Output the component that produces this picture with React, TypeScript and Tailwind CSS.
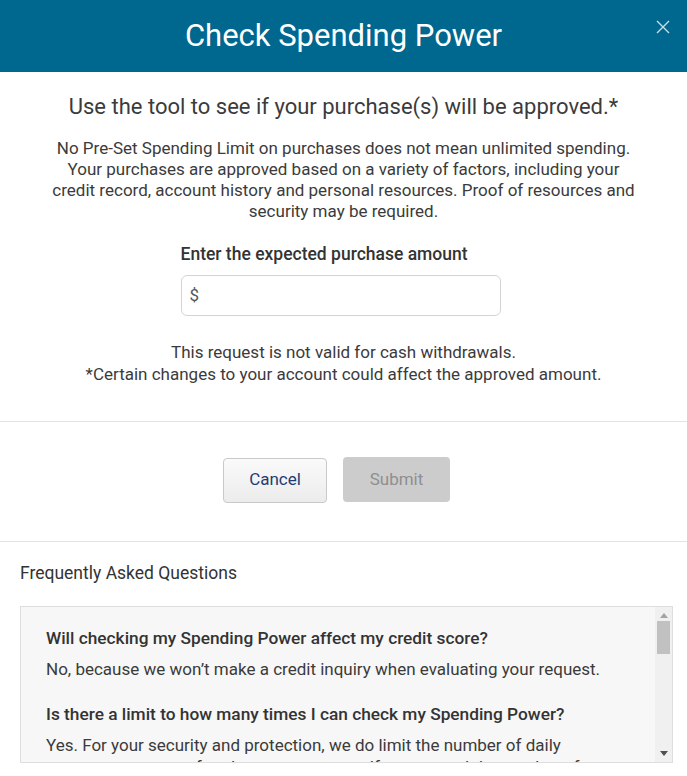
import React from 'react';

const faqs = [
  {
    q: 'Will checking my Spending Power affect my credit score?',
    a: 'No, because we won\u2019t make a credit inquiry when evaluating your request.',
  },
  {
    q: 'Is there a limit to how many times I can check my Spending Power?',
    a: 'Yes. For your security and protection, we do limit the number of daily requests to prevent fraud on your account. If you exceed the number of requests allowed, please try again tomorrow.',
  },
];

export default function App() {
  return (
    <div className="w-[687px] h-[776px] overflow-hidden bg-white text-[#333] font-['Roboto','Liberation_Sans',sans-serif]">
      {/* Header */}
      <div className="h-[72px] bg-[#00678f] flex items-center justify-center relative">
        <h1 className="text-[31px] text-white font-normal">Check Spending Power</h1>
        <button className="absolute right-[16px] top-[19px] w-[16px] h-[16px] text-[#c8dde8]">
          <svg viewBox="0 0 16 16" className="w-[16px] h-[16px]" fill="none" stroke="currentColor" strokeWidth="1.4">
            <path d="M2 2L14 14M14 2L2 14" />
          </svg>
        </button>
      </div>

      {/* Body */}
      <div className="flex flex-col items-center text-center px-[30px]">
        <h2 className="mt-[21px] text-[22px] leading-[28px] text-[#3b3b3b]">
          Use the tool to see if your purchase(s) will be approved.*
        </h2>
        <p className="mt-[17px] text-[17px] leading-[21px] text-[#3b3b3b] w-[596px]">
          No Pre-Set Spending Limit on purchases does not mean unlimited spending. Your purchases are
          approved based on a variety of factors, including your credit record, account history and
          personal resources. Proof of resources and security may be required.
        </p>
        <div className="mt-[21px] w-[320px] mr-[6px] text-left">
          <label className="block text-[17.5px] leading-[22px] font-medium text-[#333]">
            Enter the expected purchase amount
          </label>
          <div className="mt-[10px] h-[41px] rounded-[6px] border border-[#d4d4d4] flex items-center px-[8px] text-[17px] text-[#555]">
            $
          </div>
        </div>
        <p className="mt-[25px] text-[17px] leading-[22px] text-[#3b3b3b]">
          This request is not valid for cash withdrawals.
          <br />
          *Certain changes to your account could affect the approved amount.
        </p>
      </div>

      <div className="mt-[36px] border-t border-[#e3e3e3]" />

      {/* Actions */}
      <div className="h-[119px] pb-[4px] mr-[14px] flex items-center justify-center gap-[16px]">
        <button className="w-[104px] h-[45px] mt-[1px] rounded-[4px] border border-[#c9c9c9] bg-gradient-to-b from-[#fafafa] to-[#ececec] text-[17px] text-[#1f3d73]">
          Cancel
        </button>
        <button className="w-[107px] h-[45px] rounded-[4px] bg-[#cccccc] text-[17px] text-[#8f8f8f]">
          Submit
        </button>
      </div>

      <div className="border-t border-[#e3e3e3]" />

      {/* FAQ */}
      <div className="pl-[20px] pr-[14px]">
        <h3 className="mt-[20px] text-[17.5px] leading-[22px] text-[#333]">Frequently Asked Questions</h3>
        <div className="mt-[22px] h-[157px] border border-[#dedede] bg-[#f7f7f7] flex">
          <div className="flex-1 overflow-hidden pl-[25px] pr-[30px] pt-[20px]">
            {faqs.map((f) => (
              <div key={f.q} className="mb-[23px]">
                <div className="text-[17.3px] leading-[22px] font-medium text-[#333]">{f.q}</div>
                <div className="mt-[9px] text-[17px] leading-[22px] text-[#3b3b3b]">{f.a}</div>
              </div>
            ))}
          </div>
          <div className="w-[17px] bg-[#f0f0f0] flex flex-col items-center">
            <svg viewBox="0 0 8 5" className="w-[8px] h-[5px] mt-[6px]" fill="#a3a3a3">
              <path d="M0 5L4 0L8 5Z" />
            </svg>
            <div className="mt-[3px] w-[13px] h-[33px] bg-[#c1c1c1]" />
            <div className="flex-1" />
            <svg viewBox="0 0 8 5" className="w-[8px] h-[5px] mb-[6px]" fill="#505050">
              <path d="M0 0L8 0L4 5Z" />
            </svg>
          </div>
        </div>
      </div>
    </div>
  );
}
